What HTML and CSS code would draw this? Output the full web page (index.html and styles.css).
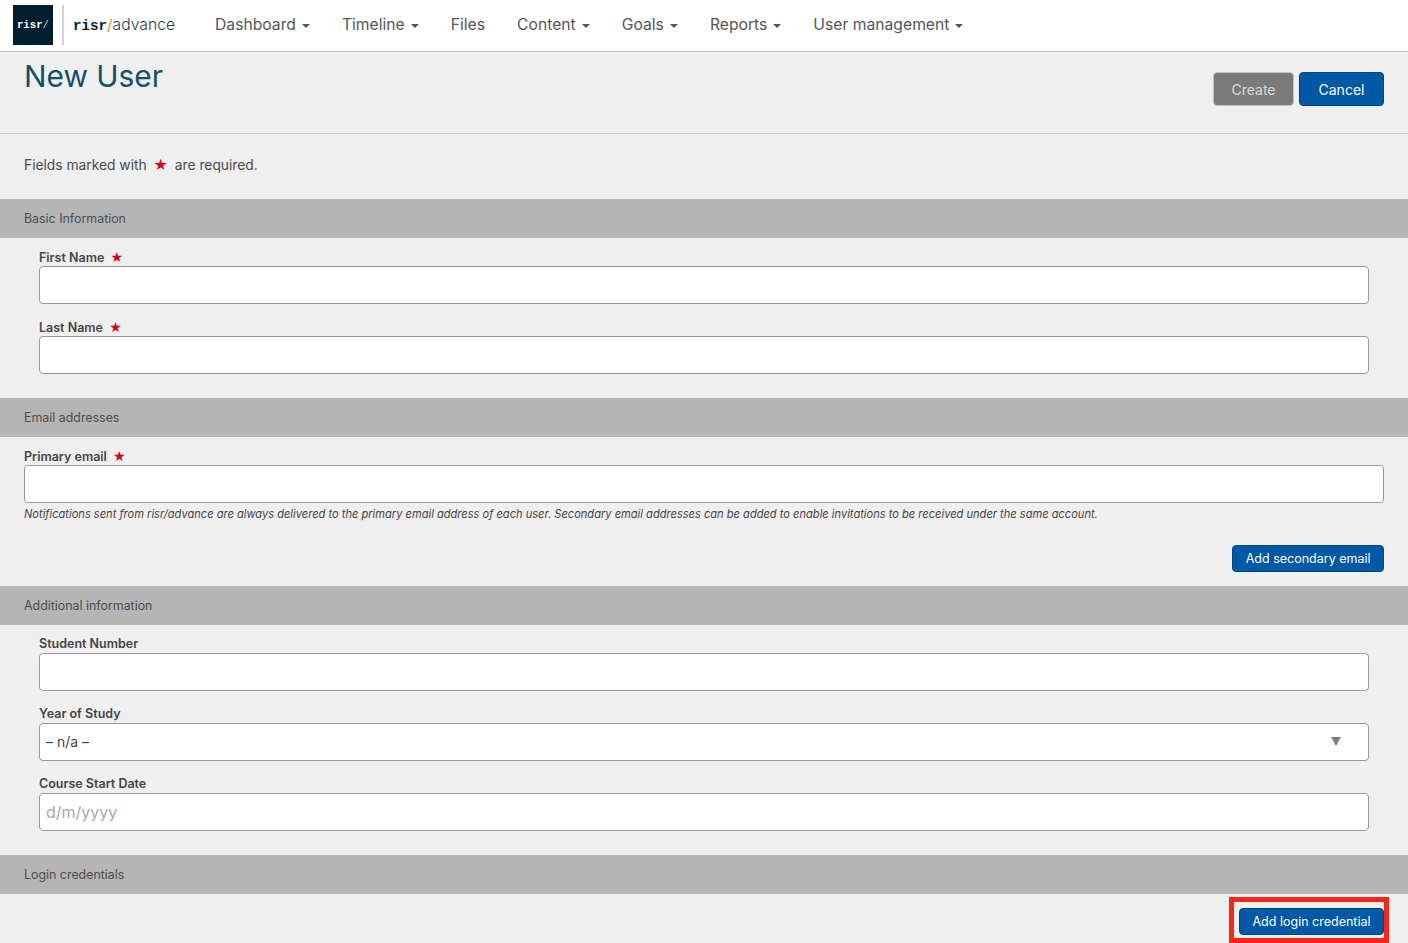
FILE: index.html
```html
<!DOCTYPE html>
<html lang="en">
<head>
<meta charset="utf-8">
<title>New User</title>
<link rel="stylesheet" href="styles.css">
</head>
<body>
<header class="topbar">
  <div class="logo-square"><span class="logo-mark">risr<span class="logo-slash-light">/</span></span></div>
  <div class="logo-divider"></div>
  <div class="logo-word"><span class="logo-risr">risr</span><span class="logo-slash">/</span><span class="logo-adv">advance</span></div>
  <nav class="nav">
    <a class="nav-item">Dashboard<i class="caret"></i></a>
    <a class="nav-item">Timeline<i class="caret"></i></a>
    <a class="nav-item">Files</a>
    <a class="nav-item">Content<i class="caret"></i></a>
    <a class="nav-item">Goals<i class="caret"></i></a>
    <a class="nav-item">Reports<i class="caret"></i></a>
    <a class="nav-item">User management<i class="caret"></i></a>
  </nav>
</header>
<main>
  <div class="title-row">
    <h1>New User</h1>
    <div class="title-actions">
      <button class="btn btn-disabled" type="button">Create</button>
      <button class="btn btn-primary" type="button">Cancel</button>
    </div>
  </div>
  <p class="required-note">Fields marked with <span class="star star-lg">★</span> are required.</p>

  <h2 class="bar">Basic Information</h2>
  <section class="fields">
    <div class="field"><label>First Name <span class="star">★</span></label><input type="text"></div>
    <div class="field"><label>Last Name <span class="star">★</span></label><input type="text"></div>
  </section>

  <h2 class="bar">Email addresses</h2>
  <section class="email">
    <label>Primary email <span class="star">★</span></label>
    <input type="text">
    <p class="help">Notifications sent from risr/advance are always delivered to the primary email address of each user. Secondary email addresses can be added to enable invitations to be received under the same account.</p>
    <div class="right-row"><button class="btn btn-small" type="button">Add secondary email</button></div>
  </section>

  <h2 class="bar">Additional information</h2>
  <section class="fields">
    <div class="field"><label>Student Number</label><input type="text"></div>
    <div class="field"><label>Year of Study</label>
      <div class="select"><span>– n/a –</span><svg class="select-arrow" width="10" height="9" viewBox="0 0 10 9"><path d="M0 0h10L5 9z"/></svg></div>
    </div>
    <div class="field"><label>Course Start Date</label><input type="text" placeholder="d/m/yyyy"></div>
  </section>

  <h2 class="bar">Login credentials</h2>
  <section class="login">
    <div class="highlight"><button class="btn btn-small" type="button">Add login credential</button></div>
  </section>
</main>
</body>
</html>
```
FILE: styles.css
```css
* { box-sizing: border-box; }
html, body { margin: 0; height: 943px; overflow: hidden; }
body {
  background: #efefef;
  color: #4a4a4a;
  font-family: "Inter", "Liberation Sans", sans-serif;
  font-size: 14px;
}
.topbar {
  display: flex;
  align-items: center;
  height: 52px;
  padding: 0 0 2px 13px;
  background: #fff;
  border-bottom: 1px solid #c8c8c8;
}
.logo-square {
  width: 40px;
  height: 40px;
  background: #001e30;
  display: flex;
  align-items: center;
  justify-content: center;
}
.logo-mark {
  color: #fff;
  font-family: "Liberation Mono", monospace;
  font-size: 10.7px;
  font-weight: 700;
}
.logo-slash-light { color: #a5e0dc; font-weight: 400; }
.logo-divider { width: 2px; height: 40px; background: #d2d2d2; margin-left: 9px; }
.logo-word { margin-left: 9px; font-size: 15px; color: #1d3b52; white-space: nowrap; width: 102px; }
.logo-risr { font-family: "Liberation Mono", monospace; font-weight: 700; font-size: 14.2px; color: #001e30; }
.logo-slash { color: #f39a34; font-weight: 500; }
.logo-adv { font-weight: 300; font-size: 15.7px; }
.nav { display: flex; margin-left: 40px; gap: 32px; }
.nav-item {
  display: flex;
  align-items: center;
  font-size: 15.7px;
  color: #555;
  white-space: nowrap;
}
.caret {
  width: 0;
  height: 0;
  margin-left: 6px;
  margin-top: 2px;
  border-left: 4px solid transparent;
  border-right: 4px solid transparent;
  border-top: 4px solid #555;
}
.title-row {
  display: flex;
  justify-content: space-between;
  height: 82px;
  padding: 0 24px;
  border-bottom: 1px solid #cfcfcf;
}
h1 {
  margin: 6px 0 0;
  font-size: 29.9px;
  line-height: 37px;
  font-weight: 400;
  color: #164f68;
}
.title-actions { display: flex; gap: 5px; margin-top: 20px; align-items: flex-start; }
.btn {
  font-family: inherit;
  border-radius: 4px;
  border: 1px solid #00477f;
  background: #0059a6;
  color: #fff;
  height: 34px;
  font-size: 14px;
  padding: 0;
}
.btn-primary { width: 85px; }
.btn-disabled { width: 81px; background: #7a7a7a; border-color: #c4c4c4; color: #d8d8d8; }
.btn-small { height: 27px; font-size: 12.5px; padding: 0 12.5px; }
.required-note { margin: 0; height: 65px; padding: 22px 24px 0; line-height: 17px; font-size: 13.8px; }
.star { color: #d9001b; font-size: 14px; margin-left: 3px; font-weight: 400; font-family: "DejaVu Sans", sans-serif; }
.star-lg { font-size: 16px; margin: 0 3px; }
.bar {
  margin: 0;
  height: 39px;
  line-height: 39px;
  padding-left: 24px;
  background: #b5b5b5;
  font-size: 12.4px;
  font-weight: 400;
  color: #4d4d4d;
}
.fields { padding: 8px 39px 12px; }
.field { margin-bottom: 12px; }
label { display: block; height: 20px; line-height: 22px; font-size: 12.5px; font-weight: 600; color: #444; }
input, .select {
  display: block;
  width: 100%;
  height: 38px;
  background: #fff;
  border: 1px solid #999;
  border-radius: 4px;
  padding: 0 6px;
  font-family: inherit;
  font-size: 16px;
  color: #444;
}
input::placeholder { color: #aaa; }
.select { display: flex; align-items: center; justify-content: space-between; font-size: 14px; padding: 0 27px 2px 6px; }
.select-arrow { fill: #808080; }
.email { padding: 8px 24px 14px; }
.help { margin: 0; height: 42px; padding-top: 3px; line-height: 16px; font-size: 11.1px; font-style: italic; color: #444; }
.right-row { display: flex; justify-content: flex-end; }
.login { display: flex; justify-content: flex-end; padding: 3px 19px 0 0; }
.highlight { border: 5px solid #ff2418; padding: 6px 0 3px 5px; height: 46px; }
.highlight .btn { display: block; width: 145px; padding: 0; }
```
